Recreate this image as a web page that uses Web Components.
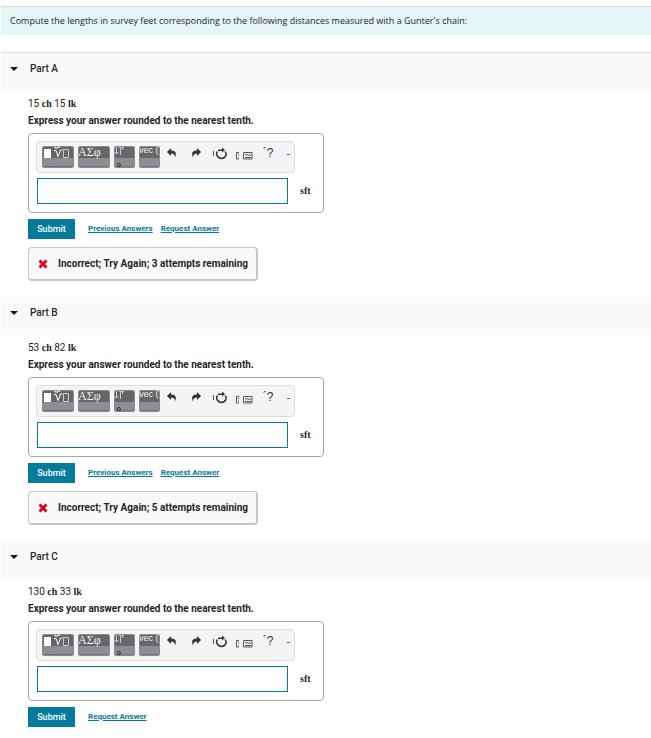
<!DOCTYPE html>
<html lang="en">
<head>
<meta charset="utf-8">
<meta name="viewport" content="width=device-width, initial-scale=1">
<title>Gunter's chain</title>
<style>
  body {
    margin: 0;
    background: #fff;
    color: #252525;
    font: 10px/16px Roboto, "Liberation Sans", sans-serif;
  }
</style>
</head>
<body>
<problem-page>
  <problem-intro>Compute the lengths in survey feet corresponding to the following distances measured with a Gunter's chain:</problem-intro>
  <problem-part name="Part A" chains="15" links="15" attempts="3"></problem-part>
  <problem-part name="Part B" chains="53" links="82" attempts="5"></problem-part>
  <problem-part name="Part C" chains="130" links="33"></problem-part>
</problem-page>

<script>
class ProblemPage extends HTMLElement {
  constructor() {
    super();
    this.attachShadow({ mode: "open" });
  }

  connectedCallback() {
    this.shadowRoot.innerHTML = `
      <style>
        :host { display: block; padding: 6px 0 0 1px; }
        main { display: block; }
      </style>
      <main><slot></slot></main>
    `;
  }
}

class ProblemIntro extends HTMLElement {
  constructor() {
    super();
    this.attachShadow({ mode: "open" });
  }

  connectedCallback() {
    this.shadowRoot.innerHTML = `
      <style>
        :host { display: block; padding-bottom: 17px; border-bottom: 1px solid #dcdcdc; }
        p {
          margin: 0;
          padding: 6px 9px;
          border-top: 1px solid #dcdcdc;
          background: #e6f6f7;
          font: 9px/16px "Open Sans", "Liberation Sans", sans-serif;
        }
      </style>
      <p><slot></slot></p>
    `;
  }
}

class MathToolbar extends HTMLElement {
  constructor() {
    super();
    this.attachShadow({ mode: "open" });
  }

  connectedCallback() {
    this.render();
  }

  render() {
    this.shadowRoot.innerHTML = `
      <style>
        :host {
          display: flex;
          align-items: flex-start;
          box-sizing: border-box;
          width: 259px;
          height: 32px;
          padding: 4px 4px 0 5px;
          border: 1px solid #dcdcdc;
          border-radius: 4px;
          background: #f4f4f4;
        }
        button {
          display: flex;
          justify-content: center;
          align-items: flex-start;
          padding: 0;
          border: 0;
          background: none;
          color: #333;
        }
        svg { display: block; }
        .palettes { display: flex; gap: 4px; }
        .palettes button {
          width: 32px;
          height: 22px;
          border-radius: 3px;
          background: linear-gradient(#66666a 0 12px, #8e8d96 12px 20px, #77777b 20px);
          box-shadow: inset 0 0 0 1px #8a8a8e;
          color: #f2f2f2;
        }
        .palettes .narrow { width: 21px; }
        .palettes .greek { font: 12px/12px "Liberation Serif", serif; justify-content: flex-start; }
        .palettes .vec { font: 9px/9px "Liberation Sans", sans-serif; justify-content: flex-start; }
        .tools { display: flex; flex: 1; padding-top: 1px; }
        .tools button { flex: 0 0 24px; }
        .tools .more { flex: 1; justify-content: flex-end; }
        .tools .help { font: 12px/12px "Liberation Sans", sans-serif; }
      </style>
      <div class="palettes">
        <button type="button" aria-label="Templates">
          <svg width="32" height="22" viewBox="0 0 32 22" fill="none">
            <path fill="#fff" d="M2 3h7v9H2z"/>
            <path stroke="#fff" d="M12 4.500h2l2 6 2.500-6.500h2M13 .5v1.500h3v-1.500M17.500 .5v1.500"/>
            <path stroke="#ccc" d="M21.500 3.500h5v8h-5z"/>
            <path stroke="#66666a" stroke-dasharray="3 3" d="M5 20.500h23"/>
          </svg>
        </button>
        <button type="button" class="greek" aria-label="Symbols">ΑΣφ</button>
        <button type="button" class="narrow" aria-label="Arrows">
          <svg width="21" height="22" viewBox="0 0 21 22" fill="none">
            <path stroke="#c8c8cc" d="M2.500 1v7M.5 6l2 2 2-2M6.500 9V1.500M5 1.500h5M8.500 1v3"/>
            <circle cx="5" cy="19" r="1.500" stroke="#333"/>
          </svg>
        </button>
        <button type="button" class="narrow vec" aria-label="Vectors">vec (</button>
      </div>
      <div class="tools">
        <button type="button" aria-label="Undo">
          <svg width="10" height="12" viewBox="0 0 10 12">
            <path fill="#333" d="M4 1v2.500C8.500 3.500 10 6 8 10.500 8 7.500 6.500 6.500 4 6.500V9L0 5z"/>
          </svg>
        </button>
        <button type="button" aria-label="Redo">
          <svg width="10" height="12" viewBox="0 0 10 12">
            <path fill="#333" d="M6 1v2.500C1.500 3.500 0 6 2 10.500 2 7.500 3.500 6.500 6 6.500V9l4-4z"/>
          </svg>
        </button>
        <button type="button" aria-label="Reset">
          <svg width="14" height="13" viewBox="0 0 14 13" fill="none">
            <path stroke="#555" d="M.5 4v5"/>
            <path stroke="#333" stroke-width="1.500" d="M4.500 4.500C2.500 7 4.500 11.500 8.500 11.500s6-4.500 3.500-7"/>
            <path fill="#333" d="M5 2.500h4V.5l3 2.500-3 2.500V4H5z"/>
          </svg>
        </button>
        <button type="button" aria-label="Keyboard shortcuts">
          <svg width="17" height="13" viewBox="0 0 17 13" fill="none" stroke="#555">
            <path d="M3 5.500H.5v6.500H3M2.500 7v1M2.500 9.500v1M7.500 5.500h8.500v6.500h-8.500zM9 10.500h6"/>
            <path stroke-dasharray="1 1" d="M9 7.500h6M10 8.500h5"/>
          </svg>
        </button>
        <button type="button" class="help" aria-label="Help">´?</button>
        <button type="button" class="more" aria-label="More">
          <svg width="3" height="12" viewBox="0 0 3 12"><path fill="#666" d="M0 7h3v1H0z"/></svg>
        </button>
      </div>
    `;
  }
}

class AnswerBox extends HTMLElement {
  constructor() {
    super();
    this.attachShadow({ mode: "open" });
  }

  connectedCallback() {
    this.shadowRoot.innerHTML = `
      <style>
        :host {
          display: block;
          box-sizing: border-box;
          width: 296px;
          padding: 7px 7px 8px;
          border: 1px solid #a6a6a6;
          border-radius: 4px;
        }
        .field { display: flex; align-items: center; gap: 12px; margin: 5px 0 0 1px; }
        input {
          box-sizing: border-box;
          width: 251px;
          height: 26px;
          padding: 0 6px;
          border: 1px solid #047a9c;
          background: #fff;
          font: 12px "Liberation Serif", serif;
        }
        label { font: bold 10px/16px "Liberation Serif", serif; }
      </style>
      <math-toolbar></math-toolbar>
      <div class="field">
        <input type="text" id="answer" autocomplete="off">
        <label for="answer"><slot></slot></label>
      </div>
    `;
  }
}

class AnswerFeedback extends HTMLElement {
  constructor() {
    super();
    this.attachShadow({ mode: "open" });
  }

  connectedCallback() {
    this.shadowRoot.innerHTML = `
      <style>
        :host {
          display: flex;
          align-items: center;
          gap: 10px;
          box-sizing: border-box;
          width: 230px;
          height: 34px;
          padding: 0 8px 0 9px;
          border: 1px solid #c7c7c7;
          border-right-width: 2px;
          border-bottom-width: 2px;
          border-radius: 4px;
          background: #f9f9f9;
          font-weight: bold;
          white-space: nowrap;
        }
        svg { flex: none; }
      </style>
      <svg width="10" height="10" viewBox="0 0 10 10" aria-hidden="true">
        <path fill="#db0020" d="M.5 2.500L2.500.5 5 3 7.500.5 9.500 2.500 7 5l2.500 2.500-2 2L5 7 2.500 9.500.5 7.500 3 5z"/>
      </svg>
      <span><slot></slot></span>
    `;
  }
}

class ProblemPart extends HTMLElement {
  constructor() {
    super();
    this.attachShadow({ mode: "open" });
  }

  connectedCallback() {
    this.render();
    this.setupEventListeners();
  }

  setupEventListeners() {
    const toggle = this.shadowRoot.querySelector(".toggle");
    const content = this.shadowRoot.querySelector(".content");
    toggle.addEventListener("click", () => {
      content.hidden = !content.hidden;
      toggle.setAttribute("aria-expanded", String(!content.hidden));
    });
  }

  render() {
    const attempts = this.getAttribute("attempts");

    this.shadowRoot.innerHTML = `
      <style>
        :host { display: block; }
        h2 { margin: 0; padding: 0 9px; background: #f9f9f9; }
        .toggle {
          display: flex;
          align-items: center;
          gap: 12px;
          width: 100%;
          height: 38px;
          padding: 0 0 6px;
          border: 0;
          background: none;
          color: inherit;
          font: 500 10px/16px Roboto, "Liberation Sans", sans-serif;
        }
        .toggle[aria-expanded="false"] svg { transform: rotate(-90deg); }
        .content { padding: 4px 9px 16px 27px; }
        .content[hidden] { display: none; }
        p { margin: 0; line-height: 17px; }
        .distance b { font-family: "Liberation Serif", serif; }
        .hint { font-weight: bold; }
        answer-box { margin-top: 4px; }
        .actions { display: flex; align-items: center; gap: 8px; margin-top: 6px; }
        .submit {
          width: 47px;
          height: 20px;
          margin-right: 5px;
          padding: 0;
          border: 0;
          background: #047a9c;
          color: #fff;
          font: 500 9px/20px Roboto, "Liberation Sans", sans-serif;
        }
        a {
          color: #047a9c;
          font: bold 8px/10px Roboto, "Liberation Sans", sans-serif;
          text-decoration: underline;
          text-underline-offset: 1px;
        }
        answer-feedback { margin-top: 8px; }
      </style>
      <section>
        <h2>
          <button type="button" class="toggle" aria-expanded="true">
            <svg width="8" height="4" viewBox="0 0 8 4"><path fill="#151515" d="M0 0h8L4 4z"/></svg>
            <span>${this.getAttribute("name")}</span>
          </button>
        </h2>
        <div class="content">
          <p class="distance">${this.getAttribute("chains")} <b>ch</b> ${this.getAttribute("links")} <b>lk</b></p>
          <p class="hint">Express your answer rounded to the nearest tenth.</p>
          <answer-box>sft</answer-box>
          <div class="actions">
            <button type="button" class="submit">Submit</button>
            ${attempts ? `<a href="#previous">Previous Answers</a>` : ""}
            <a href="#request">Request Answer</a>
          </div>
          ${attempts ? `<answer-feedback>Incorrect; Try Again; ${attempts} attempts remaining</answer-feedback>` : ""}
        </div>
      </section>
    `;
  }
}

customElements.define("problem-page", ProblemPage);
customElements.define("problem-intro", ProblemIntro);
customElements.define("math-toolbar", MathToolbar);
customElements.define("answer-box", AnswerBox);
customElements.define("answer-feedback", AnswerFeedback);
customElements.define("problem-part", ProblemPart);
</script>
</body>
</html>
